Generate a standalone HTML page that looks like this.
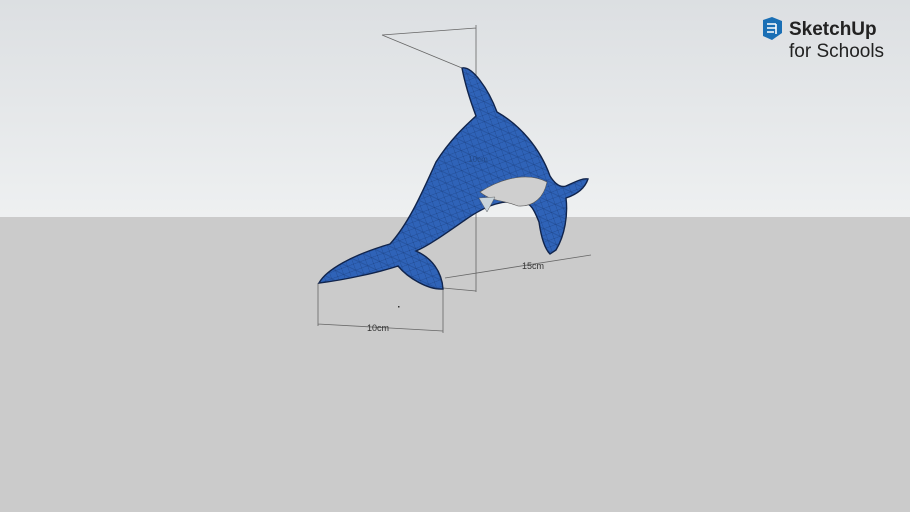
<!DOCTYPE html>
<html><head><style>
html,body{margin:0;padding:0;width:910px;height:512px;overflow:hidden;font-family:"Liberation Sans",sans-serif}
</style></head><body>
<svg width="910" height="512" xmlns="http://www.w3.org/2000/svg">
<defs>
<linearGradient id="sky" x1="0" y1="0" x2="0" y2="1">
<stop offset="0" stop-color="#dcdfe2"/><stop offset="1" stop-color="#eef0f1"/>
</linearGradient>
<pattern id="mesh" width="9" height="9" patternUnits="userSpaceOnUse" patternTransform="rotate(25)">
<path d="M0,0 L9,9 M0,9 L9,0 M0,4.5 H9" stroke="#16366f" stroke-width="0.45" opacity="0.7"/>
</pattern>
</defs>
<rect width="910" height="217" fill="url(#sky)"/>
<rect y="217" width="910" height="295" fill="#cbcbcb"/>
<g stroke="#666" stroke-width="0.8" fill="none">
<path d="M382,35 L476,28 M382,35 L462,68 M476,25 V292 M445,278 L591,255 M443,288 L476,291 M318,283 V326 M443,288 V333 M318,324 L443,331"/>
</g>
<path id="body" d="M462,68 C472,66 488,88 497,112 C520,125 540,148 550,176 C555,184 560,188 566,186 C575,182 582,178 588,179 C585,188 578,194 566,198 C568,215 565,235 556,250 L550,254 C544,248 541,236 539,222 C535,212 532,206 528,204 C505,197 485,206 465,220 C445,234 428,246 416,251 C432,258 442,272 443,289 C428,290 408,278 398,266 C380,272 345,280 319,283 C326,270 352,255 390,244 C410,222 424,188 436,162 C450,140 465,126 476,116 C470,100 465,84 462,68 Z" fill="#2f63b8" stroke="#10234a" stroke-width="1.4"/>
<path d="M462,68 C472,66 488,88 497,112 C520,125 540,148 550,176 C555,184 560,188 566,186 C575,182 582,178 588,179 C585,188 578,194 566,198 C568,215 565,235 556,250 L550,254 C544,248 541,236 539,222 C535,212 532,206 528,204 C505,197 485,206 465,220 C445,234 428,246 416,251 C432,258 442,272 443,289 C428,290 408,278 398,266 C380,272 345,280 319,283 C326,270 352,255 390,244 C410,222 424,188 436,162 C450,140 465,126 476,116 C470,100 465,84 462,68 Z" fill="url(#mesh)"/>
<path d="M480,192 C505,176 530,173 547,182 C544,197 534,207 518,206 C504,200 492,202 480,192 Z" fill="#cfcfcf" stroke="#555" stroke-width="0.6"/>
<path d="M479,198 L495,197 L487,212 Z" fill="#c8d4dc" stroke="#666" stroke-width="0.5"/>
<text x="533" y="269" font-size="9" fill="#333" text-anchor="middle" font-family="Liberation Sans">15cm</text>
<text x="378" y="331" font-size="9" fill="#333" text-anchor="middle" font-family="Liberation Sans">10cm</text>
<text x="478" y="162" font-size="8" fill="#1f3f70" text-anchor="middle" font-family="Liberation Sans" opacity="0.6">10cm</text>
<rect x="398" y="306" width="1.5" height="1.5" fill="#333"/>
<g transform="translate(761,17)">
<path d="M2,3 L11,0 L21,4 L21,16 L11,23 L2,19 Z" fill="#1a6fb5"/>
<path d="M6,7 H15 M6,11 H15 M6,15 H13 M15,7 V17" stroke="#fff" stroke-width="1.6" fill="none"/>
</g>
<text x="789" y="35" font-size="19" fill="#222" font-weight="bold" font-family="Liberation Sans">SketchUp</text>
<text x="789" y="57" font-size="19" fill="#222" font-family="Liberation Sans">for Schools</text>
</svg>
</body></html>
